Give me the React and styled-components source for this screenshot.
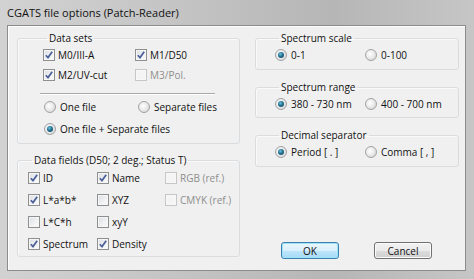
import React from "react";
import styled, { createGlobalStyle } from "styled-components";

const Global = createGlobalStyle`
  html, body { margin: 0; padding: 0; background: #c8c8c8; }
  body { font-family: "Open Sans", "Noto Sans", sans-serif; font-size: 10px; color: #111; }
  * { box-sizing: border-box; }
`;

const Window = styled.div`
  width: 474px;
  height: 279px;
  display: flex;
  flex-direction: column;
  background: linear-gradient(90deg, #d2d2d2 0%, #c3c3c3 40%, #b6b6b6 70%, #c6c6c6 100%);
  overflow: hidden;
`;

const TitleBar = styled.div`
  height: 25px;
  padding-left: 7px;
  display: flex;
  align-items: center;
  font-size: 11px;
  color: #111;
`;

const Frame = styled.div`
  flex: 1;
  display: flex;
  padding: 0 8px 8px 7px;
`;

const Client = styled.div`
  flex: 1;
  background: #f0f0f0;
  border: 1px solid #8c8c8c;
  box-shadow: inset 1px 1px 0 #fdfdfd;
  display: grid;
  grid-template-columns: 223px 204px;
  column-gap: 15px;
  padding: 5px 0 0 9px;
`;

const Column = styled.div`
  display: flex;
  flex-direction: column;
  gap: ${(p) => p.$gap || 10}px;
`;

const Group = styled.fieldset`
  margin: 0;
  border: 1px solid #dadde0;
  border-radius: 3px;
  box-shadow: inset 1px 1px 0 #fafafa;
  padding: 0 0 ${(p) => p.$pb || 4}px ${(p) => p.$pl || 10}px;
  min-width: 0;
`;

const Legend = styled.legend`
  padding: 0 2px;
  margin-left: 4px;
  line-height: 14px;
  font-size: 10px;
  color: #111;
`;

const Grid = styled.div`
  display: grid;
  grid-template-columns: ${(p) => p.$cols};
  grid-auto-rows: ${(p) => p.$row || 20}px;
  row-gap: ${(p) => p.$rg || 0}px;
  align-items: center;
  margin-left: ${(p) => p.$ml || 0}px;
`;

const Item = styled.label`
  display: flex;
  align-items: center;
  gap: ${(p) => p.$gap || 3}px;
  white-space: nowrap;
  color: ${(p) => (p.$disabled ? "#8e8e8e" : "#111")};
`;

const Box = styled.span`
  width: 12px;
  height: 12px;
  flex: none;
  border: 1px solid ${(p) => (p.$disabled ? "#c6c6c6" : "#8e8f8f")};
  background: ${(p) =>
    p.$disabled
      ? "#f4f4f4"
      : "linear-gradient(135deg, #d9dde2 0%, #f0f1f3 55%, #fbfbfb 100%)"};
  box-shadow: inset 0 0 0 1px ${(p) => (p.$disabled ? "#f8f8f8" : "#f6f6f6")};
  display: flex;
  align-items: center;
  justify-content: center;
`;

const Round = styled.span`
  width: 12px;
  height: 12px;
  flex: none;
  border-radius: 50%;
  border: 1px solid #a2a3a4;
  background: radial-gradient(circle at 40% 40%, #ffffff 0%, #e9e9ea 50%, #c9cbcd 100%);
  display: flex;
  align-items: center;
  justify-content: center;
`;

const Dot = styled.span`
  width: 6px;
  height: 6px;
  border-radius: 50%;
  background: radial-gradient(circle at 40% 35%, #6cc4de 0%, #23708f 45%, #173f55 100%);
`;

const Separator = styled.div`
  width: 175px;
  margin: 8px 0 2px -3px;
  height: 2px;
  border-top: 1px solid #a9a9a9;
  border-bottom: 1px solid #ffffff;
`;

const ButtonRow = styled.div`
  margin-top: auto;
  margin-bottom: 11px;
  display: flex;
  gap: 35px;
  padding-left: 26px;
`;

const Button = styled.button`
  width: 58px;
  height: 17px;
  padding: 0;
  font-family: inherit;
  font-size: 10px;
  color: #111;
  border-radius: 3px;
  border: 1px solid ${(p) => (p.$primary ? "#3c7fb1" : "#707070")};
  background: ${(p) =>
    p.$primary
      ? "linear-gradient(#eaf6fd 0%, #d9f0fc 50%, #bee6fd 51%, #a7d9f5 100%)"
      : "linear-gradient(#f2f2f2 0%, #ebebeb 50%, #dddddd 51%, #cfcfcf 100%)"};
  box-shadow: inset 0 0 0 1px ${(p) => (p.$primary ? "#9fe4f6" : "#fbfbfb")};
`;

const Check = ({ checked, disabled, children }) => (
  <Item $disabled={disabled}>
    <Box $disabled={disabled}>
      {checked && (
        <svg width="10" height="10" viewBox="0 0 10 10">
          <path d="M1.8 5.2 L4 7.6 L8.2 1.8" fill="none" stroke="#4a5f97" strokeWidth="1.7" />
        </svg>
      )}
    </Box>
    {children}
  </Item>
);

const Radio = ({ checked, children }) => (
  <Item $gap={4}>
    <Round>{checked && <Dot />}</Round>
    {children}
  </Item>
);

export default function App() {
  return (
    <>
      <Global />
      <Window>
        <TitleBar>CGATS file options (Patch-Reader)</TitleBar>
        <Frame>
          <Client>
            <Column $gap={9}>
              <Group $pl={25} $pb={4}>
                <Legend>Data sets</Legend>
                <Grid $cols="92px 92px">
                  <Check checked>M0/III-A</Check>
                  <Check checked>M1/D50</Check>
                  <Check checked>M2/UV-cut</Check>
                  <Check disabled>M3/Pol.</Check>
                </Grid>
                <Separator />
                <Grid $cols="94px 94px" $ml={1} $rg={2}>
                  <Radio>One file</Radio>
                  <Radio>Separate files</Radio>
                  <Radio checked>One file + Separate files</Radio>
                </Grid>
              </Group>
              <Group $pl={10} $pb={1}>
                <Legend>Data fields (D50; 2 deg.; Status T)</Legend>
                <Grid $cols="69px 68px 80px" $row={22}>
                  <Check checked>ID</Check>
                  <Check checked>Name</Check>
                  <Check disabled>RGB (ref.)</Check>
                  <Check checked>L*a*b*</Check>
                  <Check>XYZ</Check>
                  <Check disabled>CMYK (ref.)</Check>
                  <Check>L*C*h</Check>
                  <Check>xyY</Check>
                  <span />
                  <Check checked>Spectrum</Check>
                  <Check checked>Density</Check>
                </Grid>
              </Group>
            </Column>
            <Column $gap={10}>
              <Group $pl={19} $pb={4}>
                <Legend>Spectrum scale</Legend>
                <Grid $cols="90px 90px">
                  <Radio checked>0-1</Radio>
                  <Radio>0-100</Radio>
                </Grid>
              </Group>
              <Group $pl={19} $pb={3}>
                <Legend>Spectrum range</Legend>
                <Grid $cols="90px 90px">
                  <Radio checked>380 - 730 nm</Radio>
                  <Radio>400 - 700 nm</Radio>
                </Grid>
              </Group>
              <Group $pl={19} $pb={4}>
                <Legend>Decimal separator</Legend>
                <Grid $cols="90px 90px">
                  <Radio checked>Period [ . ]</Radio>
                  <Radio>Comma [ , ]</Radio>
                </Grid>
              </Group>
              <ButtonRow>
                <Button $primary>OK</Button>
                <Button>Cancel</Button>
              </ButtonRow>
            </Column>
          </Client>
        </Frame>
      </Window>
    </>
  );
}
